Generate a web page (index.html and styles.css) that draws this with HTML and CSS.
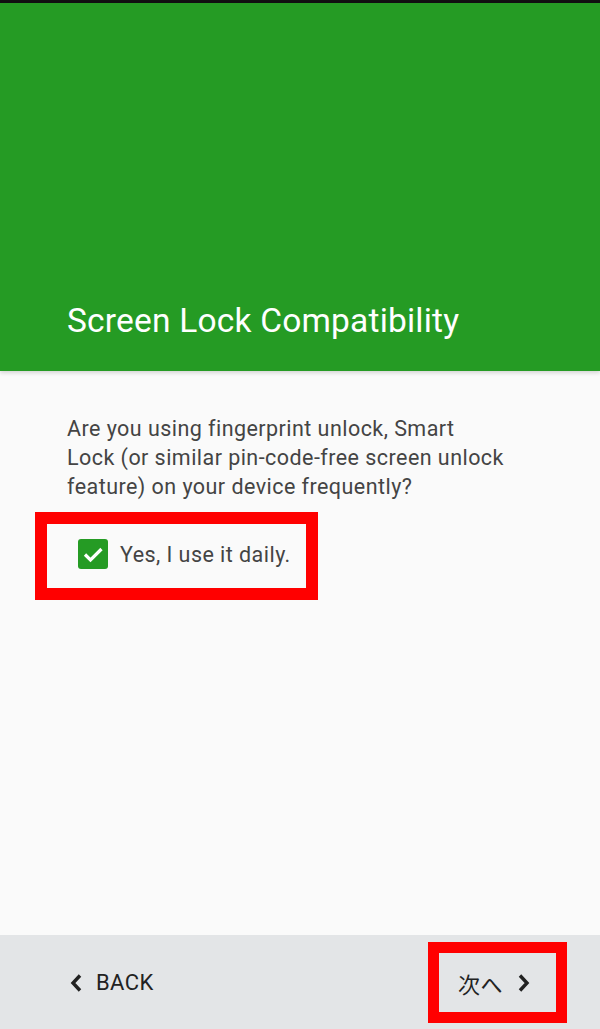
FILE: index.html
```html
<!DOCTYPE html>
<html lang="en">
<head>
    <meta charset="UTF-8">
    <meta name="viewport" content="width=device-width, initial-scale=1.0">
    <title>Screen Lock Compatibility</title>
    <link rel="stylesheet" href="styles.css">
</head>
<body>
    <div class="screen">
        <div class="status-bar"></div>

        <header class="header">
            <h1>Screen Lock Compatibility</h1>
        </header>

        <main class="content">
            <p class="question">Are you using fingerprint unlock, Smart<br>Lock (or similar pin-code-free screen unlock feature) on your device frequently?</p>

            <label class="option mark">
                <span class="checkbox">
                    <svg width="30" height="30" viewBox="0 0 30 30">
                        <rect x="0" y="0" width="30" height="30" rx="3" fill="#259b24"/>
                        <path d="M7 15.5 L12.5 21 L23.5 10" fill="none" stroke="#fff" stroke-width="3.2"/>
                    </svg>
                </span>
                <span class="option-text">Yes, I use it daily.</span>
            </label>
        </main>

        <footer class="nav">
            <button class="nav-btn back">
                <svg width="14" height="20" viewBox="0 0 14 20">
                    <path d="M11 2.5 L4 10 L11 17.5" fill="none" stroke="#222" stroke-width="3.4"/>
                </svg>
                <span>BACK</span>
            </button>
            <button class="nav-btn next mark">
                <span>次へ</span>
                <svg width="14" height="20" viewBox="0 0 14 20">
                    <path d="M3 2.5 L10 10 L3 17.5" fill="none" stroke="#222" stroke-width="3.4"/>
                </svg>
            </button>
        </footer>
    </div>
</body>
</html>
```

FILE: styles.css
```css
body {
    margin: 0;
    font-family: Roboto, "Noto Sans CJK JP", sans-serif;
    background: #fafafa;
}
.screen {
    height: 1029px;
    display: flex;
    flex-direction: column;
}
.status-bar {
    height: 3px;
    background: #111;
}
.header {
    height: 368px;
    background: #259b24;
    display: flex;
    align-items: flex-end;
    padding: 0 0 30px 67px;
    box-sizing: border-box;
    box-shadow: 0 2px 4px rgba(0, 0, 0, 0.15);
    position: relative;
}
.header h1 {
    margin: 0;
    color: #fff;
    font-weight: 400;
    font-size: 33.5px;
    letter-spacing: 0.2px;
    line-height: 40px;
}
.content {
    flex: 1;
    padding: 0 0 0 35px;
}
.question {
    margin: 43px 0 0 32px;
    width: 470px;
    color: #444;
    font-size: 21.5px;
    letter-spacing: 0.45px;
    line-height: 29px;
}
.option {
    margin-top: 11px;
    width: 283px;
    height: 88px;
    box-sizing: border-box;
    display: flex;
    align-items: center;
    padding: 0 0 4px 31px;
    gap: 12px;
}
.checkbox {
    display: flex;
}
.option-text {
    color: #444;
    font-size: 21.5px;
    letter-spacing: 0.45px;
}
.nav {
    height: 94px;
    background: #e3e5e7;
    display: flex;
    justify-content: space-between;
    align-items: flex-start;
}
.nav-btn {
    background: none;
    border: none;
    padding: 0;
    display: flex;
    align-items: center;
    font-family: Roboto, "Noto Sans CJK JP", sans-serif;
    font-size: 22px;
    letter-spacing: 0.4px;
    color: #222;
}
.back {
    margin: 35px 0 0 69px;
    gap: 13px;
}
.next {
    margin: 7px 33px 0 0;
    width: 139px;
    height: 81px;
    box-sizing: border-box;
    padding-left: 19px;
    gap: 14px;
}
.mark,
.nav-btn.mark {
    border: 12px solid #f00;
}
.nav-btn.mark {
    border-width: 11px;
}
```
